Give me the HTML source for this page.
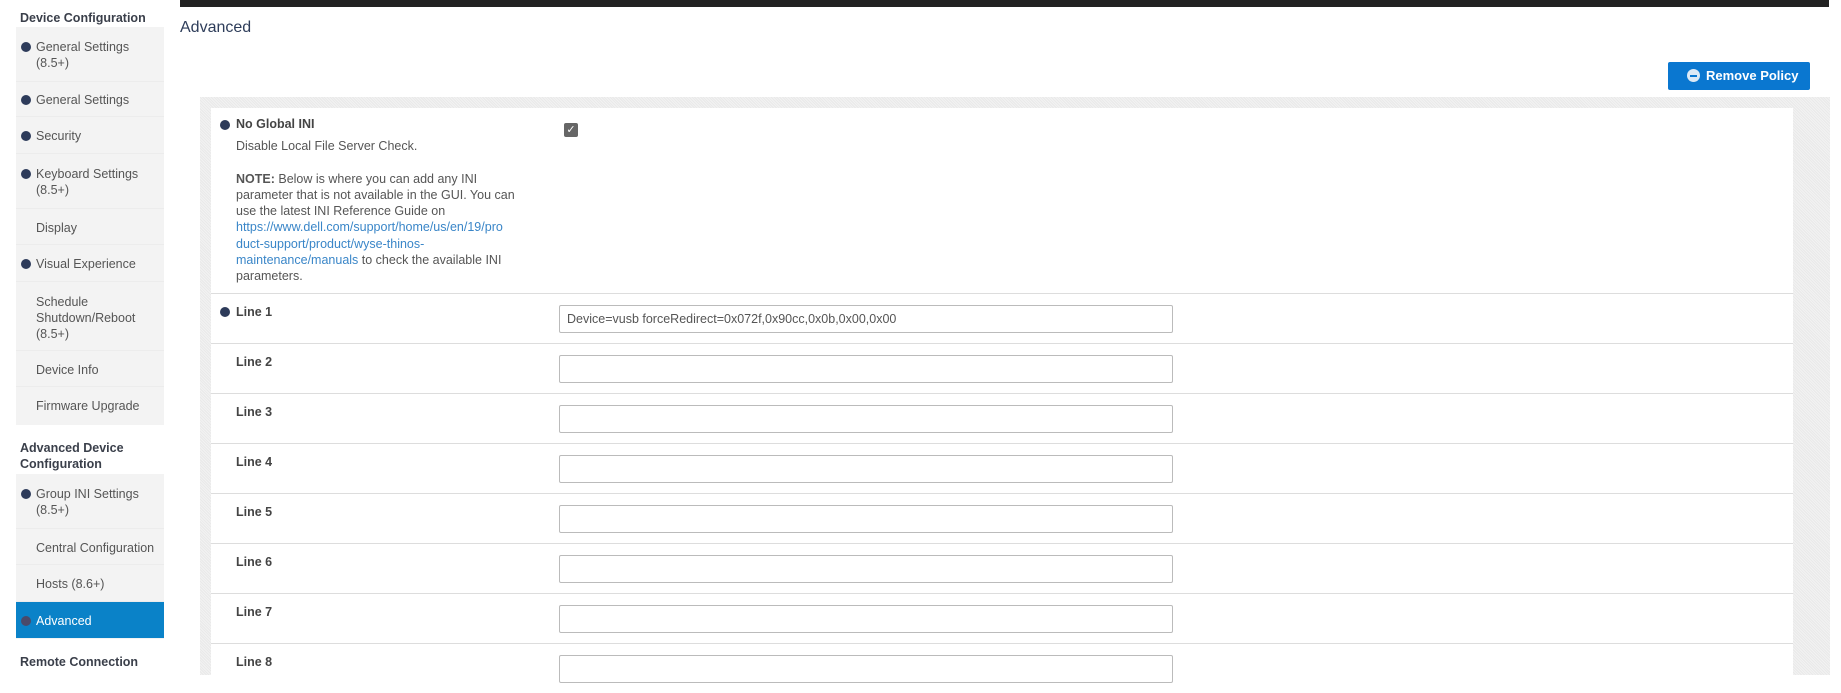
<!DOCTYPE html>
<html><head><meta charset="utf-8"><style>
*{margin:0;padding:0;box-sizing:border-box}
body{width:1841px;height:675px;overflow:hidden;background:#fff;font-family:"Liberation Sans",Arial,sans-serif;color:#444;position:relative}
.topbar{position:absolute;left:180px;top:0;width:1649px;height:7px;background:#222}
.title{position:absolute;left:180px;top:19px;font-size:16px;color:#2e3d5a}
.side{position:absolute;left:16px;width:148px;background:#f3f3f3}
.sh{position:absolute;left:20px;font-size:12.5px;font-weight:bold;color:#3a3f4a;line-height:16px}
.it{position:absolute;left:16px;width:148px;border-bottom:1px solid #ececec;font-size:12.5px;color:#555;line-height:16px;padding-left:20px}
.it .b{position:absolute;left:5px;width:10px;height:10px;border-radius:50%;background:#2d3b5a}
.it.act{background:#0a82c8;color:#fff}
.it.act .b{background:#4a4a6a}
.hatch{position:absolute;left:200px;top:97px;width:1630px;height:578px;background:repeating-linear-gradient(45deg,#e9e9e9 0 1px,#f2f2f2 1px 2px)}
.card{position:absolute;left:211px;top:108px;width:1582px;height:567px;background:#fff}
.row{position:absolute;left:211px;width:1582px;border-top:1px solid #ddd;height:50px}
.lbl{position:absolute;left:25px;font-size:12.5px;font-weight:bold;color:#444}
.dot{position:absolute;left:9px;width:10px;height:10px;border-radius:50%;background:#2d3b5a}
.inp{position:absolute;left:348px;top:11px;width:614px;height:28px;border:1px solid #bbb;border-radius:2px;font-size:12.5px;color:#555;padding:6px 7px}
a{color:#3a86c8;text-decoration:none}
.btn{position:absolute;left:1668px;top:62px;width:142px;height:28px;background:#0a77d0;border-radius:2px;color:#fff;font-size:13px;font-weight:bold;line-height:28px;padding-left:38px}
.btn .ic{position:absolute;left:19px;top:7px;width:13px;height:13px;border-radius:50%;background:#dce9f6}
.btn .ic:after{content:"";position:absolute;left:3px;top:5.5px;width:7px;height:2px;background:#0a77d0}
</style></head><body>
<div class="topbar"></div>
<div class="title">Advanced</div>

<div class="sh" style="top:10px">Device Configuration</div>
<div class="side" style="top:27px;height:398px"></div>
<div class="it" style="top:27px;height:55px;padding-top:12px"><span class="b" style="top:15px"></span>General Settings<br>(8.5+)</div>
<div class="it" style="top:82px;height:35px;padding-top:10px"><span class="b" style="top:13px"></span>General Settings</div>
<div class="it" style="top:117px;height:37px;padding-top:11px"><span class="b" style="top:14px"></span>Security</div>
<div class="it" style="top:154px;height:55px;padding-top:12px"><span class="b" style="top:15px"></span>Keyboard Settings<br>(8.5+)</div>
<div class="it" style="top:209px;height:36px;padding-top:11px">Display</div>
<div class="it" style="top:245px;height:37px;padding-top:11px"><span class="b" style="top:14px"></span>Visual Experience</div>
<div class="it" style="top:282px;height:69px;padding-top:12px">Schedule<br>Shutdown/Reboot<br>(8.5+)</div>
<div class="it" style="top:351px;height:36px;padding-top:11px">Device Info</div>
<div class="it" style="top:387px;height:38px;padding-top:11px;border:none">Firmware Upgrade</div>

<div class="sh" style="top:440px">Advanced Device<br>Configuration</div>
<div class="side" style="top:474px;height:165px"></div>
<div class="it" style="top:474px;height:55px;padding-top:12px"><span class="b" style="top:15px"></span>Group INI Settings<br>(8.5+)</div>
<div class="it" style="top:529px;height:36px;padding-top:11px">Central Configuration</div>
<div class="it" style="top:565px;height:37px;padding-top:11px">Hosts (8.6+)</div>
<div class="it act" style="top:602px;height:36px;padding-top:11px;border:none"><span class="b" style="top:14px"></span>Advanced</div>
<div class="sh" style="top:654px">Remote Connection</div>

<div class="btn"><span class="ic"></span>Remove Policy</div>
<div class="hatch"></div>
<div class="card"></div>

<div class="row" style="top:108px;height:185px;border:none">
  <span class="dot" style="top:12px"></span>
  <div class="lbl" style="top:9px">No Global INI</div>
  <div style="position:absolute;left:25px;top:30px;width:290px;font-size:12.5px;line-height:16.3px;color:#555">Disable Local File Server Check.<br><br><b>NOTE:</b> Below is where you can add any INI parameter that is not available in the GUI. You can use the latest INI Reference Guide on <a>https://www.dell.com/support/home/us/en/19/pro duct-support/product/wyse-thinos-maintenance/manuals</a> to check the available INI parameters.</div>
  <div style="position:absolute;left:353px;top:15px;width:14px;height:14px;background:#666;border-radius:2px;color:#fff;font-size:11px;line-height:14px;text-align:center">✓</div>
</div>
<div class="row" style="top:293px"><span class="dot" style="top:13px"></span><div class="lbl" style="top:11px">Line 1</div><div class="inp">Device=vusb forceRedirect=0x072f,0x90cc,0x0b,0x00,0x00</div></div>
<div class="row" style="top:343px"><div class="lbl" style="top:11px">Line 2</div><div class="inp"></div></div>
<div class="row" style="top:393px"><div class="lbl" style="top:11px">Line 3</div><div class="inp"></div></div>
<div class="row" style="top:443px"><div class="lbl" style="top:11px">Line 4</div><div class="inp"></div></div>
<div class="row" style="top:493px"><div class="lbl" style="top:11px">Line 5</div><div class="inp"></div></div>
<div class="row" style="top:543px"><div class="lbl" style="top:11px">Line 6</div><div class="inp"></div></div>
<div class="row" style="top:593px"><div class="lbl" style="top:11px">Line 7</div><div class="inp"></div></div>
<div class="row" style="top:643px"><div class="lbl" style="top:11px">Line 8</div><div class="inp"></div></div>
</body></html>
